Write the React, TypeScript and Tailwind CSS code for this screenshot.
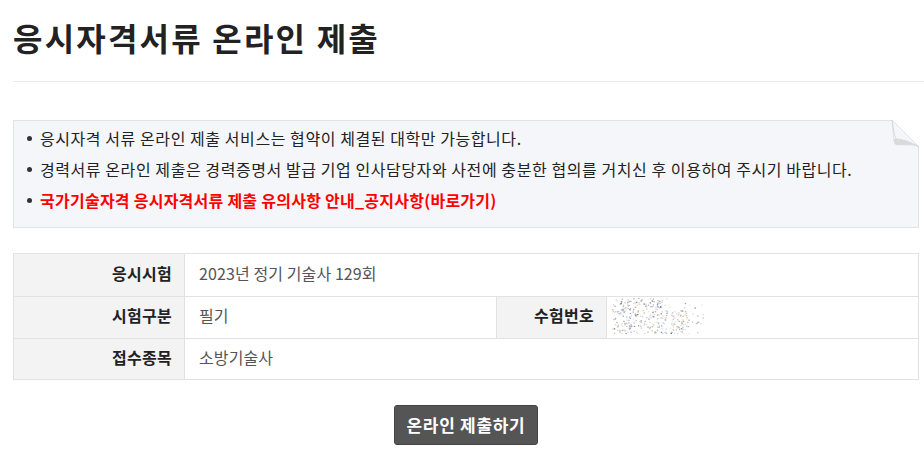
import React from "react";

const FONT = { fontFamily: '"Malgun Gothic", "Noto Sans CJK KR", "Noto Sans", sans-serif' };

function PageCurl() {
  return (
    <svg className="absolute right-[-1px] top-[-1px] h-[28px] w-[28px]" viewBox="0 0 28 28" aria-hidden="true">
      <path d="M0 0H1L28 27V28H28L28 0Z" fill="#ffffff" />
      <path d="M1 0L28 27" stroke="#e1e2e6" strokeWidth="1" fill="none" />
      <path d="M1 0C3 6 2 13 3 19C8 19 18 21 28 27C20 24 12 26 5 25C1 23 2 10 1 0Z" fill="#d9dadc" />
      <path d="M1 0C2 8 3 14 5 19C11 19 20 22 28 27" stroke="#c9cacd" strokeWidth="0.6" fill="none" />
    </svg>
  );
}

function Redacted() {
  // noisy mosaic where the candidate number was blurred out
  const dots: { x: number; y: number; c: string; o: number }[] = [];
  let seed = 7;
  const rnd = () => {
    seed = (seed * 9301 + 49297) % 233280;
    return seed / 233280;
  };
  const colors = ["#6b7fa8", "#c9a27a", "#8a9bc4", "#a3a3a3", "#d4b48c", "#5a6f9c", "#b0bcd6", "#e0c9a8"];
  for (let i = 0; i < 420; i++) {
    const x = rnd() * 92;
    const y = rnd() * 36;
    if (y < 12 && x > 50 && rnd() > 0.25) continue;
    if (x > 78 && rnd() > 0.3) continue;
    dots.push({ x, y, c: colors[Math.floor(rnd() * colors.length)], o: 0.35 + rnd() * 0.6 });
  }
  return (
    <svg className="h-[36px] w-[92px]" viewBox="0 0 92 36" aria-hidden="true">
      {dots.map((d, i) => (
        <rect key={i} x={d.x.toFixed(1)} y={d.y.toFixed(1)} width="1.4" height="1.2" fill={d.c} opacity={d.o} />
      ))}
    </svg>
  );
}

export default function App() {
  return (
    <div className="min-h-screen w-[924px] bg-white pl-[13px] pr-[5px] text-[#222]" style={FONT}>
      <h1 className="pt-[17px] text-[32px] font-bold leading-[40px] tracking-[2.2px] text-[#222]">응시자격서류 온라인 제출</h1>
      <div className="mr-[-5px] mt-[24px] h-px bg-[#ececec]" />

      <div className="relative mt-[38px] border border-[#e2e3e7] bg-[#f5f6fa] px-[13px] pb-[11px] pt-[2px] text-[16px] leading-[31px]">
        <PageCurl />
        <ul className="flex flex-col">
          <li className="flex items-center gap-[8px]">
            <span className="h-[5px] w-[5px] rounded-full bg-[#333]" />
            <span className="tracking-[0.57px]">응시자격 서류 온라인 제출 서비스는 협약이 체결된 대학만 가능합니다.</span>
          </li>
          <li className="flex items-center gap-[8px]">
            <span className="h-[5px] w-[5px] rounded-full bg-[#333]" />
            <span className="tracking-[0.57px]">경력서류 온라인 제출은 경력증명서 발급 기업 인사담당자와 사전에 충분한 협의를 거치신 후 이용하여 주시기 바랍니다.</span>
          </li>
          <li className="flex items-center gap-[8px]">
            <span className="h-[5px] w-[5px] rounded-full bg-[#333]" />
            <a className="font-bold tracking-[0.25px] text-[#ff0000]">국가기술자격 응시자격서류 제출 유의사항 안내_공지사항(바로가기)</a>
          </li>
        </ul>
      </div>

      <div className="mt-[25px] border border-[#e2e2e2] text-[16px]">
        <div className="grid h-[42px] grid-cols-[171px_1fr]">
          <div className="flex items-center justify-end border-r border-[#e2e2e2] bg-[#f3f3f3] pb-[5px] pr-[12px] font-bold tracking-[0.3px] text-[#222]">응시시험</div>
          <div className="flex items-center pb-[5px] pl-[14px] tracking-[0.1px] text-[#555]">2023년 정기 기술사 129회</div>
        </div>
        <div className="grid h-[42px] grid-cols-[171px_312px_110px_1fr] border-t border-[#e2e2e2]">
          <div className="flex items-center justify-end border-r border-[#e2e2e2] bg-[#f3f3f3] pb-[5px] pr-[12px] font-bold tracking-[0.3px] text-[#222]">시험구분</div>
          <div className="flex items-center border-r border-[#e2e2e2] pb-[5px] pl-[14px] tracking-[0.1px] text-[#555]">필기</div>
          <div className="flex items-center justify-end border-r border-[#e2e2e2] bg-[#f3f3f3] pb-[5px] pr-[12px] font-bold tracking-[0.3px] text-[#222]">수험번호</div>
          <div className="flex items-center pb-[4px] pl-[5px]">
            <Redacted />
          </div>
        </div>
        <div className="grid h-[41px] grid-cols-[171px_1fr] border-t border-[#e2e2e2]">
          <div className="flex items-center justify-end border-r border-[#e2e2e2] bg-[#f3f3f3] pb-[5px] pr-[12px] font-bold tracking-[0.3px] text-[#222]">접수종목</div>
          <div className="flex items-center pb-[5px] pl-[14px] tracking-[0.1px] text-[#555]">소방기술사</div>
        </div>
      </div>

      <div className="mt-[25px] flex justify-center">
        <button
          type="button"
          className="h-[40px] w-[144px] rounded-[3px] border border-[#444] bg-[#555] text-[17px] font-bold tracking-[0.7px] text-white"
        >
          온라인 제출하기
        </button>
      </div>
    </div>
  );
}
